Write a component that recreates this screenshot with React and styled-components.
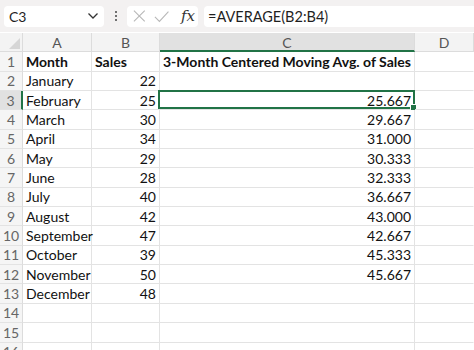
import React from 'react'
import styled, { createGlobalStyle } from 'styled-components'

const GlobalStyle = createGlobalStyle`
  html, body { margin: 0; padding: 0; background: #ffffff; }
  body { font-family: Lato, "Open Sans", sans-serif; overflow: hidden; }
`

const Sheet = styled.div`
  width: 474px;
  height: 350px;
  overflow: hidden;
  display: flex;
  flex-direction: column;
  background: #fff;
`

const Toolbar = styled.div`
  height: 32px;
  flex: none;
  display: flex;
  align-items: center;
  padding: 0 0 0 4px;
  background: #f3f1f1;
  box-sizing: border-box;
`

const Box = styled.div`
  height: 21px;
  background: #fff;
  border-radius: 4px;
  display: flex;
  align-items: center;
  box-sizing: border-box;
  color: #1f1f1f;
  font-size: 14px;
`

const NameBox = styled(Box)`
  width: 100px;
  padding: 0 5px;
  justify-content: space-between;
`

const Dots = styled.div`
  width: 23px;
  display: flex;
  flex-direction: column;
  align-items: center;
  gap: 2px;
  span {
    width: 2px;
    height: 2px;
    background: #444;
    border-radius: 1px;
  }
`

const FxBox = styled(Box)`
  width: 71px;
  padding: 0 3px 0 6px;
  gap: 8px;
`

const FxLabel = styled.span`
  font-family: "DejaVu Serif", "Liberation Serif", serif;
  font-style: italic;
  font-size: 15px;
  color: #333;
  margin-left: 4px;
`

const FormulaBox = styled(Box)`
  flex: 1;
  margin-left: 6px;
  padding-left: 4px;
  border-radius: 4px 0 0 4px;
  font-size: 14.5px;
`

const Grid = styled.div`
  display: grid;
  grid-template-columns: 23px 69px 68px 255px 59px;
  grid-auto-rows: 19.35px;
  margin-top: 1px;
`

const Cell = styled.div`
  box-sizing: border-box;
  border-right: 1px solid ${p => (p.$last ? 'transparent' : '#e3e3e3')};
  border-bottom: 1px solid #e3e3e3;
  font-size: 14px;
  color: #111;
  padding: 0 3px;
  display: flex;
  align-items: center;
  justify-content: ${p => (p.$num ? 'flex-end' : 'flex-start')};
  font-weight: ${p => (p.$bold ? 700 : 400)};
  white-space: nowrap;
  position: relative;
`

const ColHead = styled.div`
  box-sizing: border-box;
  background: ${p => (p.$active ? '#e1e1e1' : '#f3f3f3')};
  border-right: 1px solid #dcdcdc;
  border-bottom: ${p => (p.$active ? '2px solid #217346' : '1px solid #dcdcdc')};
  color: #555;
  font-size: 14px;
  display: flex;
  align-items: center;
  justify-content: center;
  padding-top: ${p => (p.$active ? '1px' : '0')};
`

const Corner = styled.div`
  background: #f3f3f3;
  border-bottom: 1px solid #dcdcdc;
  border-right: 1px solid #dcdcdc;
  box-sizing: border-box;
  display: flex;
  align-items: flex-end;
  justify-content: flex-end;
  padding: 2px;
`

const RowHead = styled.div`
  box-sizing: border-box;
  background: ${p => (p.$active ? '#e1e1e1' : '#f5f5f5')};
  border-right: ${p => (p.$active ? '2px solid #217346' : '1px solid #dcdcdc')};
  border-bottom: 1px solid #e3e3e3;
  color: #666;
  font-size: 14px;
  display: flex;
  align-items: center;
  justify-content: center;
`

const Selected = styled.div`
  position: absolute;
  inset: -1px -1px 0 -2px;
  border: 2px solid #217346;
  pointer-events: none;
  &::after {
    content: '';
    position: absolute;
    right: -4px;
    bottom: -4px;
    width: 5px;
    height: 5px;
    background: #217346;
    border: 1px solid #fff;
  }
`

const Chevron = () => (
  <svg width="12" height="8" viewBox="0 0 12 8">
    <path d="M1.5 1.5 L6 6 L10.5 1.5" fill="none" stroke="#333" strokeWidth="1.3" />
  </svg>
)

const Cross = () => (
  <svg width="14" height="14" viewBox="0 0 14 14">
    <path d="M1 1 L13 13 M13 1 L1 13" stroke="#b8b8b8" strokeWidth="1.2" fill="none" />
  </svg>
)

const Check = () => (
  <svg width="17" height="13" viewBox="0 0 17 13">
    <path d="M1 7 L6 12 L16 1" stroke="#b8b8b8" strokeWidth="1.2" fill="none" />
  </svg>
)

const data = [
  ['Month', 'Sales', '3-Month Centered Moving Avg. of Sales'],
  ['January', '22', ''],
  ['February', '25', '25.667'],
  ['March', '30', '29.667'],
  ['April', '34', '31.000'],
  ['May', '29', '30.333'],
  ['June', '28', '32.333'],
  ['July', '40', '36.667'],
  ['August', '42', '43.000'],
  ['September', '47', '42.667'],
  ['October', '39', '45.333'],
  ['November', '50', '45.667'],
  ['December', '48', ''],
  ['', '', ''],
  ['', '', ''],
  ['', '', ''],
]

export default function App() {
  return (
    <Sheet>
      <GlobalStyle />
      <Toolbar>
        <NameBox>
          <span>C3</span>
          <Chevron />
        </NameBox>
        <Dots><span /><span /><span /></Dots>
        <FxBox>
          <Cross />
          <Check />
          <FxLabel>fx</FxLabel>
        </FxBox>
        <FormulaBox>=AVERAGE(B2:B4)</FormulaBox>
      </Toolbar>
      <Grid>
        <Corner>
          <svg width="11" height="11" viewBox="0 0 11 11">
            <path d="M11 0 L11 11 L0 11 Z" fill="#d6d6d6" />
          </svg>
        </Corner>
        <ColHead>A</ColHead>
        <ColHead>B</ColHead>
        <ColHead $active>C</ColHead>
        <ColHead>D</ColHead>
        {data.map((row, i) => (
          <React.Fragment key={i}>
            <RowHead $active={i === 2}>{i + 1}</RowHead>
            <Cell $bold={i === 0}>{row[0]}</Cell>
            <Cell $bold={i === 0} $num={i > 0}>{row[1]}</Cell>
            <Cell $bold={i === 0} $num={i > 0}>
              {row[2]}
              {i === 2 && <Selected />}
            </Cell>
            <Cell $last />
          </React.Fragment>
        ))}
      </Grid>
    </Sheet>
  )
}
